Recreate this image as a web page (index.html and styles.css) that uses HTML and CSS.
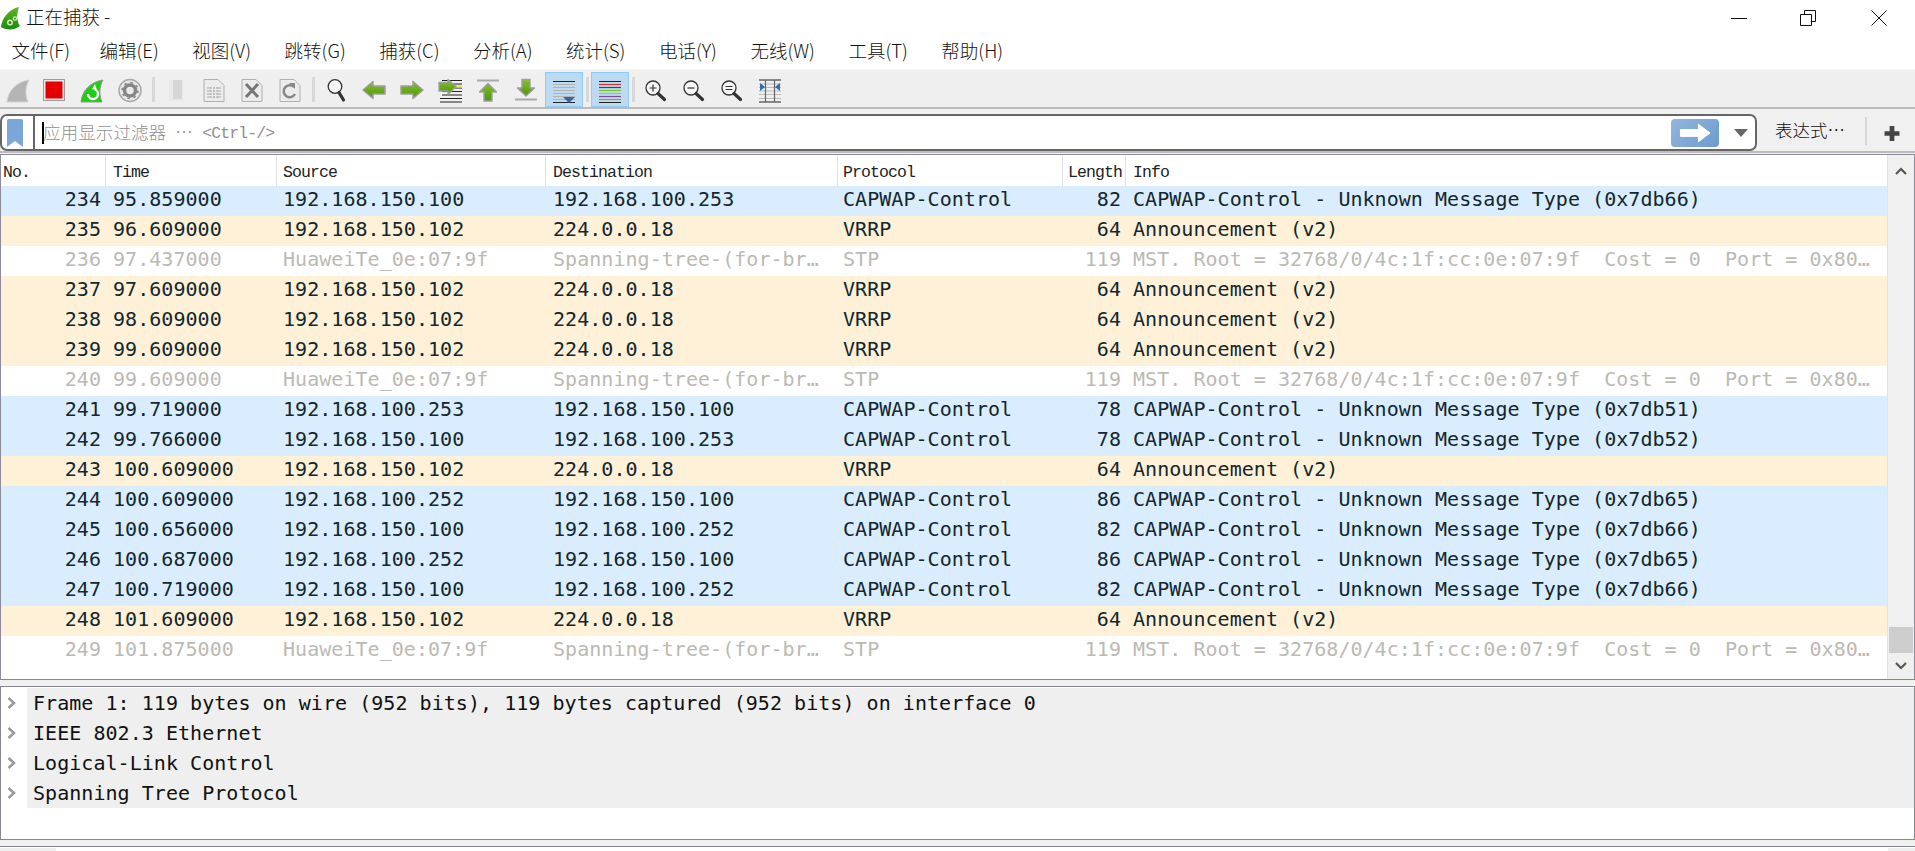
FILE: index.html
```html
<!DOCTYPE html>
<html lang="zh">
<head>
<meta charset="utf-8">
<title>正在捕获 -</title>
<link rel="stylesheet" href="styles.css">
</head>
<body>
<svg class="defs" width="0" height="0" aria-hidden="true">
  <defs>
    <linearGradient id="gArrow" x1="0" y1="0" x2="0" y2="1"><stop offset="0" stop-color="#86c224"/><stop offset="1" stop-color="#4f9410"/></linearGradient>
    <linearGradient id="gLogo" x1="0" y1="0" x2="0" y2="1"><stop offset="0" stop-color="#62b81f"/><stop offset="1" stop-color="#178a10"/></linearGradient>
  </defs>
</svg>
<div class="app">
  <header class="titlebar">
    <svg class="logo" viewBox="0 0 20 23"><path d="M0 20C1 11 8 2 18 0C15.500 7 15.500 14 19 19C13 23.500 5 23.500 0 20Z" fill="url(#gLogo)"/><circle cx="9" cy="15.500" r="2.300" fill="none" stroke="#d6ecc0" stroke-width="1.400"/><circle cx="14" cy="11.500" r="1.700" fill="none" stroke="#d6ecc0" stroke-width="1.200"/></svg>
    <span class="title-text">正在捕获 -</span>
    <div class="winctl">
      <svg class="wc wc-min" viewBox="0 0 16 16"><path d="M0 8.500H16" stroke="#111" fill="none"/></svg>
      <svg class="wc wc-max" viewBox="0 0 16 16"><path d="M0.500 4.500H11.500V15.500H0.500ZM4.500 4.500V0.500H15.500V11.500H11.500" stroke="#111" fill="none"/></svg>
      <svg class="wc wc-close" viewBox="0 0 16 16"><path d="M0.500 0.500L15.500 15.500M15.500 0.500L0.500 15.500" stroke="#111" fill="none"/></svg>
    </div>
  </header>
  <nav class="menubar">
    <span class="menu">文件(F)</span><span class="menu">编辑(E)</span><span class="menu">视图(V)</span><span class="menu">跳转(G)</span><span class="menu">捕获(C)</span><span class="menu">分析(A)</span><span class="menu">统计(S)</span><span class="menu">电话(Y)</span><span class="menu">无线(W)</span><span class="menu">工具(T)</span><span class="menu">帮助(H)</span>
  </nav>
  <div class="toolbar">
    <span class="tb tb-first"><svg class="ic" viewBox="0 0 24 24"><path d="M1 23C2 12 10 3 23 1C19 8 19 16 22 23Z" fill="#b4b4b4" stroke="#d2d2d2"/></svg></span>
    <span class="tb"><svg class="ic" viewBox="0 0 24 24"><rect x="1.500" y="0.500" width="21" height="21" fill="#e8e8e8" stroke="#9c9c9c"/><rect x="3.500" y="2.500" width="17" height="17" fill="#e40000"/></svg></span>
    <span class="tb"><svg class="ic" viewBox="0 0 24 24"><path d="M1 23C2 12 10 3 23 1C19 8 19 16 22 23Z" fill="#22cc14" stroke="#8e9a8a"/><path d="M8 15a5 5 0 1 0 7-4.500" fill="none" stroke="#fff" stroke-width="2.400"/><path d="M15 5l-3 5 5 1.500Z" fill="#fff"/></svg></span>
    <span class="tb"><svg class="ic" viewBox="0 0 24 24"><circle cx="12" cy="11.500" r="11" fill="#e9e9e9" stroke="#a9a9a9" stroke-width="1.500"/><circle cx="12" cy="11.500" r="5.500" fill="none" stroke="#858585" stroke-width="3.500"/><circle cx="12" cy="11.500" r="8" fill="none" stroke="#858585" stroke-width="1.500" stroke-dasharray="2.500 3.800"/></svg></span>
    <span class="tb-sep"></span>
    <span class="tb"><svg class="ic" viewBox="0 0 24 24"><path d="M5 1H19V21L12 22H5Z" fill="#e8e8e8"/><path d="M9 1H18V20H9Z" fill="#d6d6d6"/></svg></span>
    <span class="tb"><svg class="ic" viewBox="0 0 24 24"><path d="M2 0.500H16L22 6.500V22.500H2Z" fill="#ececec" stroke="#b0b0b0"/><path d="M5 9H19M5 12H19M5 15H19M5 18H19M8 8V20M12 8V20M16 8V20" stroke="#aaa" stroke-dasharray="2 1"/></svg></span>
    <span class="tb"><svg class="ic" viewBox="0 0 24 24"><path d="M2 0.500H16L22 6.500V22.500H2Z" fill="#ececec" stroke="#b0b0b0"/><path d="M6 5L18 18M18 5L6 18" stroke="#777" stroke-width="3"/></svg></span>
    <span class="tb"><svg class="ic" viewBox="0 0 24 24"><path d="M2 0.500H16L22 6.500V22.500H2Z" fill="#ececec" stroke="#b0b0b0"/><path d="M16 8A6 6 0 1 0 17 15" fill="none" stroke="#888" stroke-width="2.500"/><path d="M11 4l6 0 0 6Z" fill="#888"/></svg></span>
    <span class="tb-sep"></span>
    <span class="tb"><svg class="ic" viewBox="0 0 24 24"><circle cx="11" cy="7.500" r="6.800" fill="#f6f6f6" stroke="#333" stroke-width="1.300"/><path d="M15 13.500L19.500 21" stroke="#333" stroke-width="3.200" stroke-linecap="round"/></svg></span>
    <span class="tb"><svg class="ic" viewBox="0 0 24 24"><path d="M1 11L11 2.500V7H23V15H11V19.500Z" fill="url(#gArrow)" stroke="#9e9e9e" stroke-width="1.500" stroke-linejoin="round"/></svg></span>
    <span class="tb"><svg class="ic" viewBox="0 0 24 24"><path d="M23 11L13 2.500V7H1V15H13V19.500Z" fill="url(#gArrow)" stroke="#9e9e9e" stroke-width="1.500" stroke-linejoin="round"/></svg></span>
    <span class="tb"><svg class="ic" viewBox="0 0 24 24"><path d="M4 1.500H24M4 5H24M4 9H24M4 12.500H24M4 16H24M2 19.500H24M2 23H24" stroke="#222" stroke-width="1.100"/><rect x="17" y="6" width="7" height="2.500" fill="#f5e663"/><path d="M18 7.500L10 0.500V3.500H1V12H10V15.500Z" fill="url(#gArrow)" stroke="#9e9e9e" stroke-width="1.300" stroke-linejoin="round"/></svg></span>
    <span class="tb"><svg class="ic" viewBox="0 0 24 24"><path d="M1 1.500H23" stroke="#aaa" stroke-width="2"/><path d="M12 4.500L20.500 13H16V22H8V13H3.500Z" fill="url(#gArrow)" stroke="#9e9e9e" stroke-width="1.400" stroke-linejoin="round"/></svg></span>
    <span class="tb"><svg class="ic" viewBox="0 0 24 24"><path d="M1 20.500H23" stroke="#aaa" stroke-width="2"/><path d="M12 17L20.500 9H16V0.500H8V9H3.500Z" fill="url(#gArrow)" stroke="#9e9e9e" stroke-width="1.400" stroke-linejoin="round"/></svg></span>
    <span class="tb tb-on"><svg class="ic" viewBox="0 0 24 24"><path d="M1 2.500H23M1 23.500H23" stroke="#222" stroke-width="1.200"/><path d="M1 5.500H23M1 8.500H23M1 11.500H23M1 14.500H23M1 17.500H23M1 20.500H23" stroke="#b5b5ad" stroke-width="1.200"/><path d="M11 18H23L17 24Z" fill="#3567a5"/></svg></span>
    <span class="tb-sep"></span>
    <span class="tb tb-on"><svg class="ic" viewBox="0 0 24 24"><path d="M1 2.500H23M1 23.500H23" stroke="#222" stroke-width="1.200"/><path d="M1 5.500H23" stroke="#d43030" stroke-width="1.200"/><path d="M1 8.500H23" stroke="#3d3d88" stroke-width="1.200"/><path d="M1 11.500H23" stroke="#7dc81e" stroke-width="1.200"/><path d="M1 14.500H23" stroke="#9ad040" stroke-width="1.200"/><path d="M1 17.500H23" stroke="#7c4a96" stroke-width="1.200"/><path d="M1 20.500H23" stroke="#c09020" stroke-width="1.200"/></svg></span>
    <span class="tb-sep"></span>
    <span class="tb"><svg class="ic" viewBox="0 0 24 24"><circle cx="9" cy="9" r="7" fill="#f6f6f6" stroke="#333" stroke-width="1.300"/><path d="M5.500 9H12.500M9 5.500V12.500" stroke="#333" stroke-width="1.200"/><path d="M14 14.500L20.500 20.500" stroke="#333" stroke-width="3.200" stroke-linecap="round"/></svg></span>
    <span class="tb"><svg class="ic" viewBox="0 0 24 24"><circle cx="9" cy="9" r="7" fill="#f6f6f6" stroke="#333" stroke-width="1.300"/><path d="M5.500 9H12.500" stroke="#333" stroke-width="1.200"/><path d="M14 14.500L20.500 20.500" stroke="#333" stroke-width="3.200" stroke-linecap="round"/></svg></span>
    <span class="tb"><svg class="ic" viewBox="0 0 24 24"><circle cx="9" cy="9" r="7" fill="#f6f6f6" stroke="#333" stroke-width="1.300"/><path d="M5.500 7.500H12.500M5.500 10.500H12.500" stroke="#333" stroke-width="1.200"/><path d="M14 14.500L20.500 20.500" stroke="#333" stroke-width="3.200" stroke-linecap="round"/></svg></span>
    <span class="tb"><svg class="ic" viewBox="0 0 24 24"><path d="M1 1H23M1 23H23" stroke="#222" stroke-width="1.200"/><path d="M1 5H23M1 8.500H23M1 12H23M1 15.500H23M1 19.500H23" stroke="#bbb"/><path d="M7.500 1V23M16.500 1V23" stroke="#666" stroke-width="1.200"/><path d="M2 4V12L7 8ZM22 4V12L17 8Z" fill="#2f6cb0"/></svg></span>
  </div>
  <div class="filterbar">
    <div class="filter">
      <svg class="bookmark" viewBox="0 0 16 28"><path d="M1.500 0H14.500A1.500 1.500 0 0 1 16 1.500V28L8 22L0 28V1.500A1.500 1.500 0 0 1 1.500 0Z" fill="#7ba6d8"/></svg>
      <span class="filter-div"></span>
      <span class="caret"></span>
      <span class="placeholder">应用显示过滤器<span class="ph-dots">⋯</span><span class="ph-mono">&lt;Ctrl-/&gt;</span></span>
      <span class="go"><svg class="go-ic" viewBox="0 0 34 20"><path d="M1.500 6.500H20V1L32 10L20 19V13.500H1.500Z" fill="#fff" stroke="#fff" stroke-linejoin="round"/></svg></span>
      <span class="drop"></span>
    </div>
    <span class="expr">表达式…</span>
    <span class="expr-sep"></span>
    <svg class="plus" viewBox="0 0 16 16"><path d="M5.500 0H10.500V5.500H16V10.500H10.500V16H5.500V10.500H0V5.500H5.500Z" fill="#444"/></svg>
  </div>
  <div class="gray-rule"></div>
  <section class="list">
    <div class="list-main">
      <div class="row head"><span>No.</span><span>Time</span><span>Source</span><span>Destination</span><span>Protocol</span><span>Length</span><span>Info</span></div>
      <div class="row blue"><span>234</span><span>95.859000</span><span>192.168.150.100</span><span>192.168.100.253</span><span>CAPWAP-Control</span><span>82</span><span>CAPWAP-Control - Unknown Message Type (0x7db66)</span></div>
      <div class="row yellow"><span>235</span><span>96.609000</span><span>192.168.150.102</span><span>224.0.0.18</span><span>VRRP</span><span>64</span><span>Announcement (v2)</span></div>
      <div class="row grey"><span>236</span><span>97.437000</span><span>HuaweiTe_0e:07:9f</span><span>Spanning-tree-(for-br…</span><span>STP</span><span>119</span><span>MST. Root = 32768/0/4c:1f:cc:0e:07:9f  Cost = 0  Port = 0x80…</span></div>
      <div class="row yellow"><span>237</span><span>97.609000</span><span>192.168.150.102</span><span>224.0.0.18</span><span>VRRP</span><span>64</span><span>Announcement (v2)</span></div>
      <div class="row yellow"><span>238</span><span>98.609000</span><span>192.168.150.102</span><span>224.0.0.18</span><span>VRRP</span><span>64</span><span>Announcement (v2)</span></div>
      <div class="row yellow"><span>239</span><span>99.609000</span><span>192.168.150.102</span><span>224.0.0.18</span><span>VRRP</span><span>64</span><span>Announcement (v2)</span></div>
      <div class="row grey"><span>240</span><span>99.609000</span><span>HuaweiTe_0e:07:9f</span><span>Spanning-tree-(for-br…</span><span>STP</span><span>119</span><span>MST. Root = 32768/0/4c:1f:cc:0e:07:9f  Cost = 0  Port = 0x80…</span></div>
      <div class="row blue"><span>241</span><span>99.719000</span><span>192.168.100.253</span><span>192.168.150.100</span><span>CAPWAP-Control</span><span>78</span><span>CAPWAP-Control - Unknown Message Type (0x7db51)</span></div>
      <div class="row blue"><span>242</span><span>99.766000</span><span>192.168.150.100</span><span>192.168.100.253</span><span>CAPWAP-Control</span><span>78</span><span>CAPWAP-Control - Unknown Message Type (0x7db52)</span></div>
      <div class="row yellow"><span>243</span><span>100.609000</span><span>192.168.150.102</span><span>224.0.0.18</span><span>VRRP</span><span>64</span><span>Announcement (v2)</span></div>
      <div class="row blue"><span>244</span><span>100.609000</span><span>192.168.100.252</span><span>192.168.150.100</span><span>CAPWAP-Control</span><span>86</span><span>CAPWAP-Control - Unknown Message Type (0x7db65)</span></div>
      <div class="row blue"><span>245</span><span>100.656000</span><span>192.168.150.100</span><span>192.168.100.252</span><span>CAPWAP-Control</span><span>82</span><span>CAPWAP-Control - Unknown Message Type (0x7db66)</span></div>
      <div class="row blue"><span>246</span><span>100.687000</span><span>192.168.100.252</span><span>192.168.150.100</span><span>CAPWAP-Control</span><span>86</span><span>CAPWAP-Control - Unknown Message Type (0x7db65)</span></div>
      <div class="row blue"><span>247</span><span>100.719000</span><span>192.168.150.100</span><span>192.168.100.252</span><span>CAPWAP-Control</span><span>82</span><span>CAPWAP-Control - Unknown Message Type (0x7db66)</span></div>
      <div class="row yellow"><span>248</span><span>101.609000</span><span>192.168.150.102</span><span>224.0.0.18</span><span>VRRP</span><span>64</span><span>Announcement (v2)</span></div>
      <div class="row grey"><span>249</span><span>101.875000</span><span>HuaweiTe_0e:07:9f</span><span>Spanning-tree-(for-br…</span><span>STP</span><span>119</span><span>MST. Root = 32768/0/4c:1f:cc:0e:07:9f  Cost = 0  Port = 0x80…</span></div>
    </div>
    <div class="scroll">
      <span class="sb-btn sb-up"><svg class="chev" viewBox="0 0 12 8"><path d="M1 7L6 2L11 7" fill="none" stroke="#555" stroke-width="2.200"/></svg></span>
      <span class="sb-track"><span class="sb-thumb"></span></span>
      <span class="sb-btn sb-down"><svg class="chev" viewBox="0 0 12 8"><path d="M1 1L6 6L11 1" fill="none" stroke="#555" stroke-width="2.200"/></svg></span>
    </div>
  </section>
  <section class="details">
    <div class="d-row"><svg class="tw" viewBox="0 0 9 12"><path d="M1.500 1L7 6L1.500 11" fill="none" stroke="#999" stroke-width="2.500"/></svg><span class="d-text">Frame 1: 119 bytes on wire (952 bits), 119 bytes captured (952 bits) on interface 0</span></div>
    <div class="d-row"><svg class="tw" viewBox="0 0 9 12"><path d="M1.500 1L7 6L1.500 11" fill="none" stroke="#999" stroke-width="2.500"/></svg><span class="d-text">IEEE 802.3 Ethernet</span></div>
    <div class="d-row"><svg class="tw" viewBox="0 0 9 12"><path d="M1.500 1L7 6L1.500 11" fill="none" stroke="#999" stroke-width="2.500"/></svg><span class="d-text">Logical-Link Control</span></div>
    <div class="d-row"><svg class="tw" viewBox="0 0 9 12"><path d="M1.500 1L7 6L1.500 11" fill="none" stroke="#999" stroke-width="2.500"/></svg><span class="d-text">Spanning Tree Protocol</span></div>
  </section>
  <section class="bytes">
    <span class="bytes-gutter"></span>
    <span class="bytes-sb"></span>
  </section>
</div>
</body>
</html>
```
FILE: styles.css
```css
* { box-sizing: border-box; }
html, body { margin: 0; padding: 0; background: #f0f0f0; }
.defs { position: absolute; }
.app {
  width: 1915px; height: 851px; overflow: hidden;
  display: flex; flex-direction: column;
  font-family: "Noto Sans CJK SC", "Noto Sans", sans-serif;
  color: #111;
}
.titlebar { height: 35px; background: #fff; display: flex; align-items: center; }
.logo { width: 20px; height: 23px; margin: 1px 0 0 1px; flex: none; }
.title-text { margin: 0 0 4px 5px; font-size: 18.500px; font-weight: 300; }
.winctl { margin-left: auto; display: flex; align-items: center; height: 100%; }
.wc { width: 16px; height: 16px; display: block; }
.wc-min { margin-right: 53px; }
.wc-max { margin-right: 55px; }
.wc-close { margin-right: 28px; }

.menubar { height: 34px; background: #fff; display: flex; align-items: center; padding-bottom: 4px; }
.menu { font-size: 18.500px; font-weight: 300; padding: 0 11.500px; margin-right: 10.500px; white-space: nowrap; }
.menu:first-child { margin-right: 6.500px; }

.toolbar {
  height: 40px; background: #efefef;
  border-top: 1px solid #f6f6f6; border-bottom: 2px solid #bbb;
  display: flex; align-items: stretch; padding-top: 2px;
}
.tb { width: 38px; display: flex; align-items: center; justify-content: center; flex: none; border: 1px solid transparent; padding-top: 3px; }
.tb-first { width: 35px; }
.tb-on { background: #bcdbf3; border-color: #93c9f5; }
.ic { width: 24px; height: 24px; display: block; overflow: visible; }
.tb-sep { width: 8px; flex: none; }
.tb-sep::before { content: ""; display: block; width: 3px; height: 25px; margin: 5px auto 0; background: #d8d8d8; }

.filterbar { height: 42px; background: #f0f0f0; display: flex; align-items: flex-start; padding-top: 5px; }
.filter {
  width: 1757px; height: 37px; flex: none;
  background: #fff; border: 2px solid #666; border-radius: 7px;
  display: flex; align-items: center; padding-left: 5px;
}
.bookmark { width: 16px; height: 28px; flex: none; }
.filter-div { width: 2px; height: 33px; background: #666; margin-left: 10px; flex: none; }
.caret { width: 2px; height: 22px; background: #000; margin-left: 7px; flex: none; }
.placeholder { margin: 0 0 3px -1px; font-size: 17.600px; color: #8f8f8f; font-weight: 300; white-space: nowrap; display: flex; align-items: center; }
.ph-dots { margin-left: 9px; width: 16px; font-family: "Noto Sans CJK SC", sans-serif; }
.ph-mono { font-family: "Liberation Mono", monospace; font-size: 16.500px; letter-spacing: -0.900px; margin: 4px 0 0 11px; }
.go {
  margin-left: auto; width: 48px; height: 28px; flex: none;
  background: linear-gradient(135deg, #94b6dc, #6b9bce); border-radius: 4px;
  display: flex; align-items: center; justify-content: center;
}
.go-ic { width: 33px; height: 20px; display: block; }
.drop { width: 0; height: 0; flex: none; border-left: 7px solid transparent; border-right: 7px solid transparent; border-top: 8px solid #666; margin: 0 7px 0 15px; }
.expr { font-size: 17.500px; font-weight: 300; margin: -1px 0 0 18px; line-height: 33px; white-space: nowrap; }
.expr-sep { width: 2px; height: 28px; background: #d6d6d6; margin: 3px 0 0 20px; flex: none; }
.plus { width: 16px; height: 15px; margin: 12px 0 0 17px; flex: none; display: block; }

.gray-rule { height: 2px; background: #bbb; margin-bottom: 1px; flex: none; }

.list {
  height: 526px; flex: none; background: #fff;
  border: 1px solid #8b8b9b; border-bottom-color: #85898f;
  display: flex;
}
.list-main { flex: 1; min-width: 0; }
.row {
  display: grid;
  grid-template-columns: 105px 171px 269px 292px 225px 63px 1fr;
  height: 30px; line-height: 27px;
  font-family: "DejaVu Sans Mono", monospace;
  font-size: 20px; letter-spacing: 0.040px; color: #12272e;
  white-space: pre;
}
.row span { padding-left: 7px; overflow: hidden; }
.row span:nth-child(1), .row span:nth-child(6) { padding-left: 0; padding-right: 5px; text-align: right; }
.row span:nth-child(3) { padding-left: 6px; }
.row span:nth-child(5) { padding-left: 5px; }
.blue { background: #daedff; }
.yellow { background: #fef1d7; }
.grey { background: #fff; color: #bcb9b2; }
.head {
  height: 31px; line-height: 35px; background: #fff; color: #222;
  font-family: "Liberation Mono", monospace; font-size: 16.500px; letter-spacing: -0.900px;
}
.head span { border-right: 1px solid #e2e2e2; }
.head span:nth-child(1) { padding-left: 2px; padding-right: 0; text-align: left; }
.head span:nth-child(6) { padding-left: 5px; padding-right: 0; text-align: left; }
.head span:nth-child(7) { border-right: 0; }

.scroll { width: 27px; flex: none; background: #f0f0f0; border-left: 1px solid #e2e2e2; display: flex; flex-direction: column; }
.sb-btn { display: flex; align-items: center; justify-content: center; flex: none; }
.sb-up { height: 32px; }
.sb-down { height: 26px; }
.sb-track { flex: 1; display: flex; align-items: flex-end; justify-content: center; }
.sb-thumb { width: 24px; height: 26px; background: #cdcdcd; display: block; }
.chev { width: 12px; height: 8px; display: block; }

.details {
  margin-top: 6px; height: 154px; flex: none; background: #fff;
  border: 1px solid #85898f; padding-top: 1px;
}
.d-row { height: 30px; display: flex; align-items: center; background: linear-gradient(90deg, #fff 26px, #efefef 26px); }
.tw { width: 9px; height: 12px; margin-left: 6px; flex: none; }
.d-text {
  margin-left: 17px; font-family: "DejaVu Sans Mono", monospace; font-size: 20px;
  letter-spacing: 0.040px; color: #111; white-space: pre;
}

.bytes { margin-top: 6px; flex: 1; background: #fff; border-top: 1px solid #85898f; display: flex; justify-content: space-between; padding-top: 1px; }
.bytes-gutter { width: 56px; background: #efefef; }
.bytes-sb { width: 27px; background: #efefef; }
```
